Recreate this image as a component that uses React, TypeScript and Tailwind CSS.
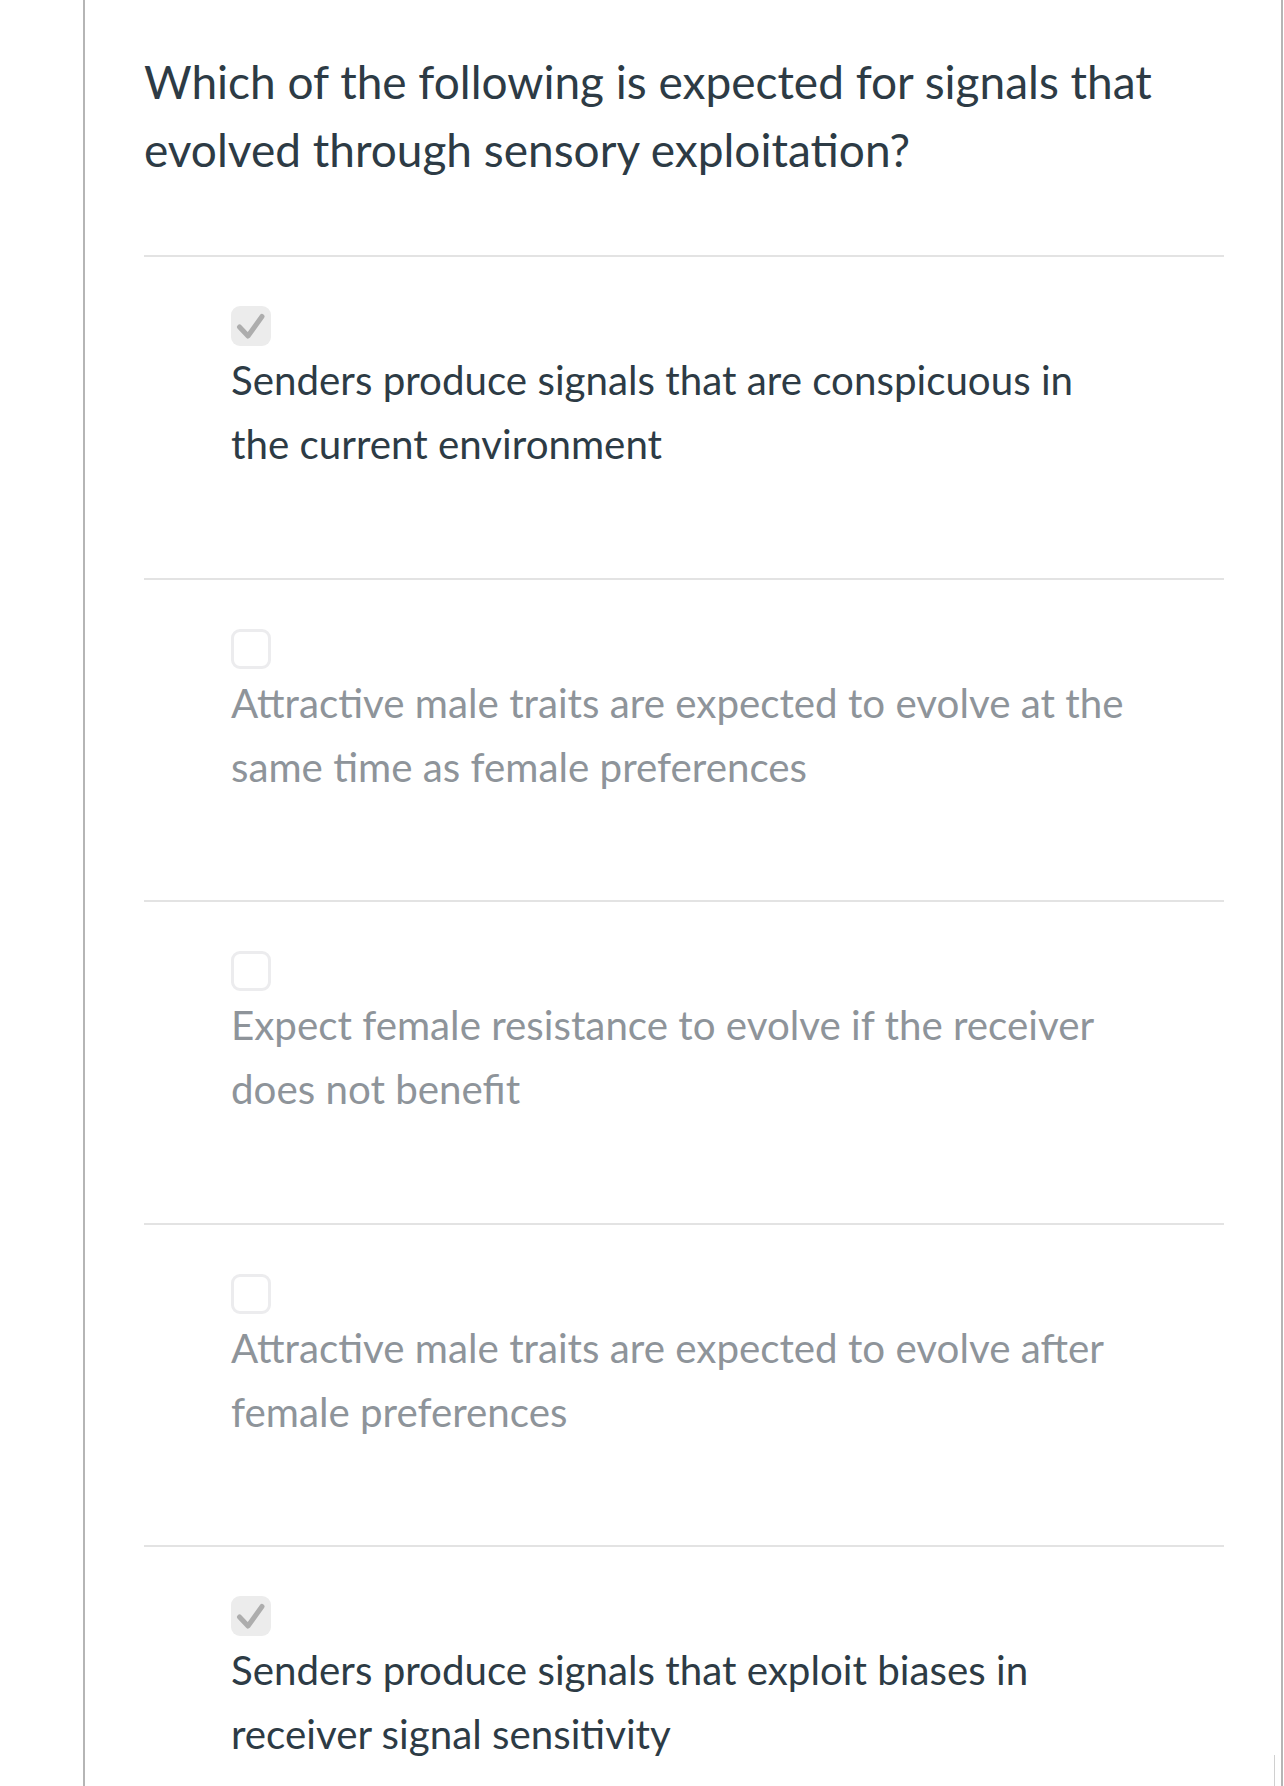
const options = [
  { text: "Senders produce signals that are conspicuous in the current environment", checked: true },
  { text: "Attractive male traits are expected to evolve at the same time as female preferences", checked: false },
  { text: "Expect female resistance to evolve if the receiver does not benefit", checked: false },
  { text: "Attractive male traits are expected to evolve after female preferences", checked: false },
  { text: "Senders produce signals that exploit biases in receiver signal sensitivity", checked: true },
];

function Box({ checked }: { checked: boolean }) {
  if (checked) {
    return (
      <span className="block h-10 w-10 rounded-[9px] bg-[#ececec]">
        <svg width="40" height="40" viewBox="0 0 40 40" fill="none">
          <path d="M8.5 21l8.5 9L31 10.5" stroke="#adadad" strokeWidth="5" strokeLinecap="round" strokeLinejoin="round" />
        </svg>
      </span>
    );
  }
  return <span className="block h-10 w-10 rounded-[9px] border-[3px] border-[#ececee] bg-white" />;
}

export default function App() {
  return (
    <div className="relative h-[1786px] w-[1284px] overflow-hidden bg-white font-['Lato','Liberation_Sans',sans-serif]">
      <div className="ml-[83px] mr-[1px] h-full border-x-2 border-x-[#b5b5b5] pl-[59px] pr-[57px] pt-[48px]">
        <h1 className="text-[46px] font-normal leading-[68px] text-[#2d3b45]">
          Which of the following is expected for signals that evolved through sensory exploitation?
        </h1>

        <div className="mt-[71px]">
          {options.map((o, i) => (
            <div key={i} className="h-[322.5px] border-t-2 border-[#e3e3e3] pl-[87px] pt-[49px]">
              <Box checked={o.checked} />
              <p
                className={
                  "mt-[2px] w-[895px] text-[40.3px] leading-[64px] " +
                  (o.checked ? "text-[#2d3b45]" : "text-[#8e949a]")
                }
              >
                {o.text}
              </p>
            </div>
          ))}
        </div>
      </div>
      <div className="absolute bottom-0 right-[9px] h-[31px] w-px bg-[#d0d0d0]" />
    </div>
  );
}
